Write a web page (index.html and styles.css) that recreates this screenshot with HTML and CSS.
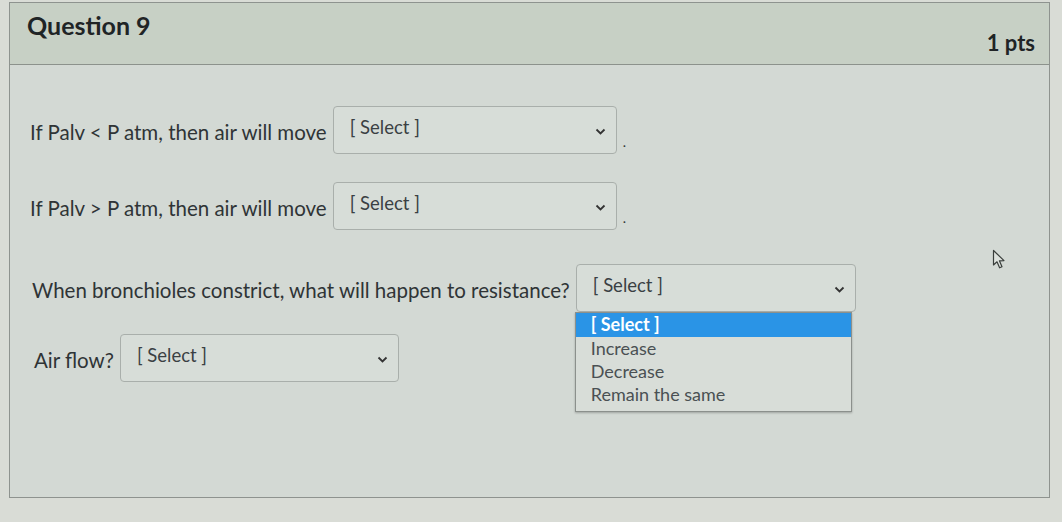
FILE: index.html
```html
<!DOCTYPE html>
<html lang="en-US">
<head>
	<meta charset="UTF-8" />
	<title>Question 9</title>
	<link rel="stylesheet" href="styles.css">
</head>
<body>
	<div class="question">
		<div class="question-header">
			<h2 class="question-title">Question 9</h2>
			<div class="question-points">1 pts</div>
		</div>
		<div class="question-body">
			<div class="q-row">
				<span class="q-label">If Palv &lt; P atm, then air will move</span>
				<div class="select">
					<span>[ Select ]</span>
					<svg class="chevron" width="11" height="7" viewBox="0 0 11 7"><path d="M1.5 1.5 L5.5 5.5 L9.5 1.5" fill="none" stroke="#333" stroke-width="1.8"/></svg>
				</div>
				<span class="dot">.</span>
			</div>
			<div class="q-row">
				<span class="q-label">If Palv &gt; P atm, then air will move</span>
				<div class="select">
					<span>[ Select ]</span>
					<svg class="chevron" width="11" height="7" viewBox="0 0 11 7"><path d="M1.5 1.5 L5.5 5.5 L9.5 1.5" fill="none" stroke="#333" stroke-width="1.8"/></svg>
				</div>
				<span class="dot">.</span>
			</div>
			<div class="q-row q-row-wide">
				<span class="q-label">When bronchioles constrict, what will happen to resistance?</span>
				<div class="select select-open">
					<span>[ Select ]</span>
					<svg class="chevron" width="11" height="7" viewBox="0 0 11 7"><path d="M1.5 1.5 L5.5 5.5 L9.5 1.5" fill="none" stroke="#333" stroke-width="1.8"/></svg>
					<ul class="options">
						<li class="selected">[ Select ]</li>
						<li>Increase</li>
						<li>Decrease</li>
						<li>Remain the same</li>
					</ul>
				</div>
			</div>
			<div class="q-row q-row-tight">
				<span class="q-label">Air flow?</span>
				<div class="select select-short">
					<span>[ Select ]</span>
					<svg class="chevron" width="11" height="7" viewBox="0 0 11 7"><path d="M1.5 1.5 L5.5 5.5 L9.5 1.5" fill="none" stroke="#333" stroke-width="1.8"/></svg>
				</div>
			</div>
		</div>
		<svg class="cursor" width="14" height="22" viewBox="0 0 14 22"><path d="M1.5 1.5 L1.5 16 L5 12.8 L7.6 18.8 L10 17.8 L7.4 11.8 L12 11.6 Z" fill="#dde2dd" stroke="#3a3f3c" stroke-width="1.2" stroke-linejoin="round"/></svg>
	</div>
</body>
</html>
```

FILE: styles.css
```css
body {
	margin: 0;
	padding: 2px 12px 22px 9px;
	background-color: #d9dcd6;
	font-family: Lato, "Open Sans", sans-serif;
	color: #2f3436;
}

.question {
	position: relative;
	height: 496px;
	box-sizing: border-box;
	border: 1px solid #8e938f;
	background-color: #d3d9d4;
}

.question-header {
	display: flex;
	justify-content: space-between;
	height: 62px;
	box-sizing: border-box;
	padding: 7px 14px 0 17px;
	background-color: #c7d0c5;
	border-bottom: 1px solid #8c928c;
}

.question-title {
	margin: 0;
	font-size: 25px;
	font-weight: 700;
	line-height: 30px;
	color: #1f2426;
}

.question-points {
	align-self: flex-end;
	margin-bottom: 8px;
	font-size: 22px;
	font-weight: 700;
	line-height: 26px;
	color: #1f2426;
}

.question-body {
	display: flex;
	flex-direction: column;
	gap: 28px;
	padding: 41px 0 0 20px;
}

.q-row {
	display: flex;
	align-items: center;
	gap: 6px;
	font-size: 20.5px;
}

.q-row-wide {
	margin-top: 6px;
	padding-left: 2px;
}

.q-row-tight {
	margin-top: -6px;
	padding-left: 4px;
}

.q-label {
	padding-top: 4px;
}

.select {
	position: relative;
	display: flex;
	align-items: center;
	justify-content: space-between;
	width: 284px;
	height: 48px;
	box-sizing: border-box;
	padding: 0 10px 0 16px;
	border: 1px solid #a9afab;
	border-radius: 4px;
	background-color: #d7ddd8;
	font-size: 18.5px;
	color: #3a4043;
}

.select span {
	margin-top: -6px;
}

.chevron {
	margin-top: 2px;
}

.dot {
	align-self: flex-end;
	margin-bottom: 4px;
	font-size: 14px;
}

.select-open {
	width: 280px;
}

.select-short {
	width: 279px;
}

.options {
	position: absolute;
	top: 47px;
	left: -2px;
	width: 277px;
	margin: 0;
	padding: 0 0 5px 0;
	list-style: none;
	box-sizing: border-box;
	border: 1px solid #8b908c;
	background-color: #d8ddd8;
	box-shadow: 0 1px 2px rgba(0, 0, 0, 0.25);
	font-size: 18px;
	line-height: 23px;
	color: #4a5053;
}

.options li {
	padding-left: 15px;
}

.options .selected {
	height: 24px;
	background-color: #2a94e6;
	color: #ffffff;
	font-weight: 700;
}

.cursor {
	position: absolute;
	left: 982px;
	top: 246px;
}
```
